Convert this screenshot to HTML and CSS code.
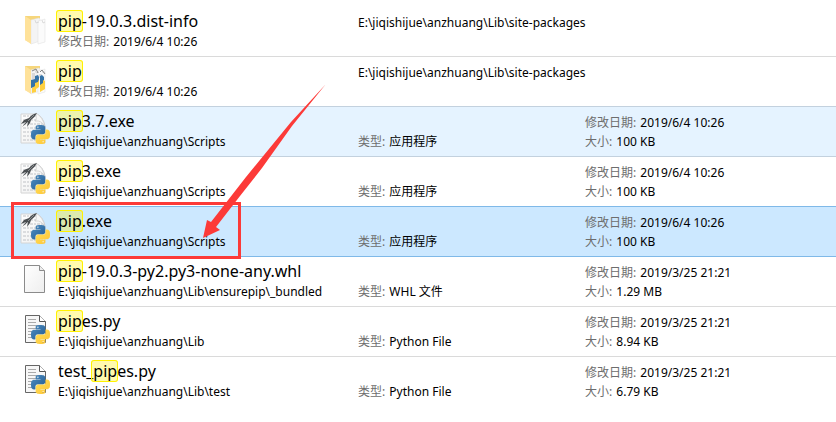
FILE: index.html
```
<!DOCTYPE html>
<html lang="zh-CN">
<head>
<meta charset="utf-8">
<meta name="viewport" content="width=device-width, initial-scale=1">
<title>pip</title>
<link rel="stylesheet" href="styles.css">
</head>
<body>
<svg class="defs" width="0" height="0" aria-hidden="true">
  <defs>
    <linearGradient id="blue" x1="0" y1="0" x2="1" y2="1"><stop offset="0" stop-color="#4f8fc4"/><stop offset="1" stop-color="#225b91"/></linearGradient>
    <linearGradient id="gold" x1="1" y1="1" x2="0" y2="0"><stop offset="0" stop-color="#ffe05c"/><stop offset="1" stop-color="#ffc331"/></linearGradient>
    <linearGradient id="paper" x1="0" y1="0" x2="1" y2="1"><stop offset="0" stop-color="#ffffff"/><stop offset="1" stop-color="#eeeeee"/></linearGradient>
    <path id="snake" d="M14.25.18l.9.2.73.26.59.3.45.32.34.34.25.34.16.33.1.3.04.26.02.2-.01.13V8.5l-.05.63-.13.55-.21.46-.26.38-.3.31-.33.25-.35.19-.35.14-.33.1-.3.07-.26.04-.21.02H8.77l-.69.05-.59.14-.5.22-.41.27-.33.32-.27.35-.2.36-.15.37-.1.35-.07.32-.04.27-.02.21v3.06H3.17l-.21-.03-.28-.07-.32-.12-.35-.18-.36-.26-.36-.36-.35-.46-.32-.59-.28-.73-.21-.88-.14-1.05-.05-1.23.06-1.22.16-1.04.24-.87.32-.71.36-.57.4-.44.42-.33.42-.24.4-.16.36-.1.32-.05.24-.01h.16l.06.01h8.16v-.83H6.18l-.01-2.75-.02-.37.05-.34.11-.31.17-.28.25-.26.31-.23.38-.2.44-.18.51-.15.58-.12.64-.1.71-.06.77-.04.84-.02 1.27.05zm-6.3 1.98l-.23.33-.08.41.08.41.23.34.33.22.41.09.41-.09.33-.22.23-.34.08-.41-.08-.41-.23-.33-.33-.22-.41-.09-.41.09z"/>
    <symbol id="python" viewBox="0 0 24 24">
      <use href="#snake" fill="url(#blue)" stroke="url(#blue)" stroke-width=".5"/>
      <use href="#snake" fill="url(#gold)" stroke="url(#gold)" stroke-width=".5" transform="rotate(180 12 12)"/>
    </symbol>
    <symbol id="folder" viewBox="0 0 30 34">
      <path d="M5 4h15v24l-9 3-6-3z" fill="#f6d67c"/>
      <path d="M11 8l8-2 1 1v22l-9 3z" fill="#f4f4f4" stroke="#e2e2e2" stroke-width=".6"/>
      <path d="M18 9l7-2v23l-7 2z" fill="#fbfbfb" stroke="#e2e2e2" stroke-width=".6"/>
      <path d="M15 8l1 3 3-1M22 8l1 3 2-1" fill="none" stroke="#c8c8c8" stroke-width=".6"/>
      <path d="M5 4l6 4v24l-6-4z" fill="#ffe29a"/>
    </symbol>
    <symbol id="folder-python" viewBox="0 0 30 34">
      <use href="#folder"/>
      <path d="M12 9l4-2 2 4M20 10l2-2 3 4" fill="none" stroke="#858585"/>
      <path d="M12 12h3M12 14h3M12 16h3M19 13h3M19 15h3" stroke="#a5a5a5" stroke-width=".7"/>
      <path d="M11 18l4-1v-3l3-1 1 2v5l-4 2v3l-4 1zM20 17v-3l2-1 2 2v6l-4 3z" fill="#3472a7"/>
      <path d="M12 26l3-2v-3l3-1 1-3v8l-3 2v3l-4 1zM20 23l3-2v-3l2 1v8l-5 3z" fill="#ffd03f"/>
    </symbol>
    <symbol id="exe" viewBox="0 0 30 34">
      <path d="M1 2h15q7 2 9 12v17H1z" fill="url(#paper)" stroke="#d4d4d4"/>
      <path d="M3 4h13M3 8h14M3 12h20M3 16h20M3 20h20M3 24h20M3 28h20" stroke="#d2d4d6" stroke-width="1.500" stroke-dasharray="3 1 2 1"/>
      <path d="M16 1q1 8-1 8 7-1 10 6Q23 5 16 1z" fill="#f8f8f8" stroke="#c2c2c2" stroke-width=".6"/>
      <path d="M17 1q-5 1-8 5l-5 2-3 4 5-2-4 5 6-5-1 5 3-4 1-3q4-3 6-7z" fill="#4a4e51"/>
      <path d="M14 3l-6 6" stroke="#9ca0a3" stroke-width=".8"/>
      <use href="#python" x="11" y="13" width="19" height="19"/>
    </symbol>
    <symbol id="blank" viewBox="0 0 30 34">
      <path d="M4.500 3.500h15l5 5v22h-20z" transform="translate(0 -.0)" fill="url(#paper)" stroke="#8b8b8b"/>
      <path d="M19.500 3.500v5h5" fill="#eee" stroke="#8b8b8b"/>
    </symbol>
    <symbol id="script" viewBox="0 0 30 34">
      <path d="M5.500 3.500h14l6 6v21h-20z" fill="#f7f7f7" stroke="#666"/>
      <path d="M19.500 3.500v6h6" fill="#fff" stroke="#555"/>
      <path d="M8 7.500h8M8 10.500h8M8 13.500h12M8 16.500h8M8 19.500h4M8 22.500h4M8 25.500h4" stroke="#aaa"/>
      <use href="#python" x="11" y="13" width="19" height="19"/>
    </symbol>
  </defs>
</svg>
<main class="results">
  <ul class="files">
    <li class="file">
      <svg class="icon" aria-hidden="true"><use href="#folder"/></svg>
      <div class="cell"><div class="name"><mark>pip</mark>-19.0.3.dist-info</div><div class="line"><span class="label">修改日期:</span> 2019/6/4 10:26</div></div>
      <div class="cell path"><div class="line">E:\jiqishijue\anzhuang\Lib\site-packages</div></div>
    </li>
    <li class="file">
      <svg class="icon" aria-hidden="true"><use href="#folder-python"/></svg>
      <div class="cell"><div class="name"><mark>pip</mark></div><div class="line"><span class="label">修改日期:</span> 2019/6/4 10:26</div></div>
      <div class="cell path"><div class="line">E:\jiqishijue\anzhuang\Lib\site-packages</div></div>
    </li>
    <li class="file hovered">
      <svg class="icon" aria-hidden="true"><use href="#exe"/></svg>
      <div class="cell"><div class="name"><mark>pip</mark>3.7.exe</div><div class="line">E:\jiqishijue\anzhuang\Scripts</div></div>
      <div class="cell type"><div class="line"><span class="label">类型:</span> 应用程序</div></div>
      <div class="cell"><div class="date line"><span class="label">修改日期:</span> 2019/6/4 10:26</div><div class="line"><span class="label">大小:</span> 100 KB</div></div>
    </li>
    <li class="file">
      <svg class="icon" aria-hidden="true"><use href="#exe"/></svg>
      <div class="cell"><div class="name"><mark>pip</mark>3.exe</div><div class="line">E:\jiqishijue\anzhuang\Scripts</div></div>
      <div class="cell type"><div class="line"><span class="label">类型:</span> 应用程序</div></div>
      <div class="cell"><div class="date line"><span class="label">修改日期:</span> 2019/6/4 10:26</div><div class="line"><span class="label">大小:</span> 100 KB</div></div>
    </li>
    <li class="file selected">
      <svg class="icon" aria-hidden="true"><use href="#exe"/></svg>
      <div class="cell"><div class="name"><mark>pip</mark>.exe</div><div class="line">E:\jiqishijue\anzhuang\Scripts</div></div>
      <div class="cell type"><div class="line"><span class="label">类型:</span> 应用程序</div></div>
      <div class="cell"><div class="date line"><span class="label">修改日期:</span> 2019/6/4 10:26</div><div class="line"><span class="label">大小:</span> 100 KB</div></div>
    </li>
    <li class="file">
      <svg class="icon" aria-hidden="true"><use href="#blank"/></svg>
      <div class="cell"><div class="name"><mark>pip</mark>-19.0.3-py2.py3-none-any.whl</div><div class="line">E:\jiqishijue\anzhuang\Lib\ensurepip\_bundled</div></div>
      <div class="cell type"><div class="line"><span class="label">类型:</span> WHL 文件</div></div>
      <div class="cell"><div class="date line"><span class="label">修改日期:</span> 2019/3/25 21:21</div><div class="line"><span class="label">大小:</span> 1.29 MB</div></div>
    </li>
    <li class="file">
      <svg class="icon" aria-hidden="true"><use href="#script"/></svg>
      <div class="cell"><div class="name"><mark>pip</mark>es.py</div><div class="line">E:\jiqishijue\anzhuang\Lib</div></div>
      <div class="cell type"><div class="line"><span class="label">类型:</span> Python File</div></div>
      <div class="cell"><div class="date line"><span class="label">修改日期:</span> 2019/3/25 21:21</div><div class="line"><span class="label">大小:</span> 8.94 KB</div></div>
    </li>
    <li class="file">
      <svg class="icon" aria-hidden="true"><use href="#script"/></svg>
      <div class="cell"><div class="name">test_<mark>pip</mark>es.py</div><div class="line">E:\jiqishijue\anzhuang\Lib\test</div></div>
      <div class="cell type"><div class="line"><span class="label">类型:</span> Python File</div></div>
      <div class="cell"><div class="date line"><span class="label">修改日期:</span> 2019/3/25 21:21</div><div class="line"><span class="label">大小:</span> 6.79 KB</div></div>
    </li>
  </ul>
  <svg class="annotation" width="340" height="270" aria-hidden="true">
    <rect x="12.500" y="203.500" width="227" height="54" fill="none" stroke="#fc3a38" stroke-width="3"/>
    <path d="M325.500 84.500L291 122 246 177 211 222 207 220 203 238 220 230 216 227 240 196 262 168 292 126z" fill="#fc3a38"/>
  </svg>
</main>
</body>
</html>
```

FILE: styles.css
```
* {
  box-sizing: border-box;
}

body {
  margin: 0;
  background: #fff;
  color: #000;
  font-family: "Noto Sans", "Noto Sans CJK SC", sans-serif;
  font-size: 12px;
}

.defs {
  position: absolute;
}

.results {
  position: relative;
  padding-top: 6px;
}

.files {
  margin: 0;
  padding: 0;
  list-style: none;
}

.file {
  display: grid;
  grid-template-columns: 38px 300fr 227fr 251fr;
  min-height: 50px;
  padding: 5px 0 4px 20px;
  border-top: 1px solid #dadada;
  white-space: nowrap;
}

.file:first-child {
  border-top-color: transparent;
}

.icon {
  width: 30px;
  height: 34px;
}

.cell {
  min-width: 0;
}

.name {
  height: 21px;
  font-size: 16px;
  line-height: 19px;
}

.line {
  height: 18px;
  line-height: 18px;
}

.date {
  height: 19px;
}

.path,
.cell:last-child {
  padding-top: 2px;
}

.type {
  padding-top: 21px;
}

.label {
  margin-right: 1px;
  color: #6d6d6d;
}

mark {
  margin: 0 -1px 0 -2px;
  padding: 0 1px 0 2px;
  border-radius: 3px;
  background: rgb(255 240 0 / 32%);
  box-shadow: inset 0 0 0 1px #fff200;
  color: inherit;
}

.hovered {
  background: #e5f3ff;
}

.hovered,
.hovered + .file {
  border-top-color: #c3d1de;
}

.selected {
  background: #cce8ff;
  border-top-color: #7fb9e8;
}

.selected + .file {
  border-top-color: #7fb9e8;
}

.annotation {
  position: absolute;
  top: 0;
  left: 0;
}
```
